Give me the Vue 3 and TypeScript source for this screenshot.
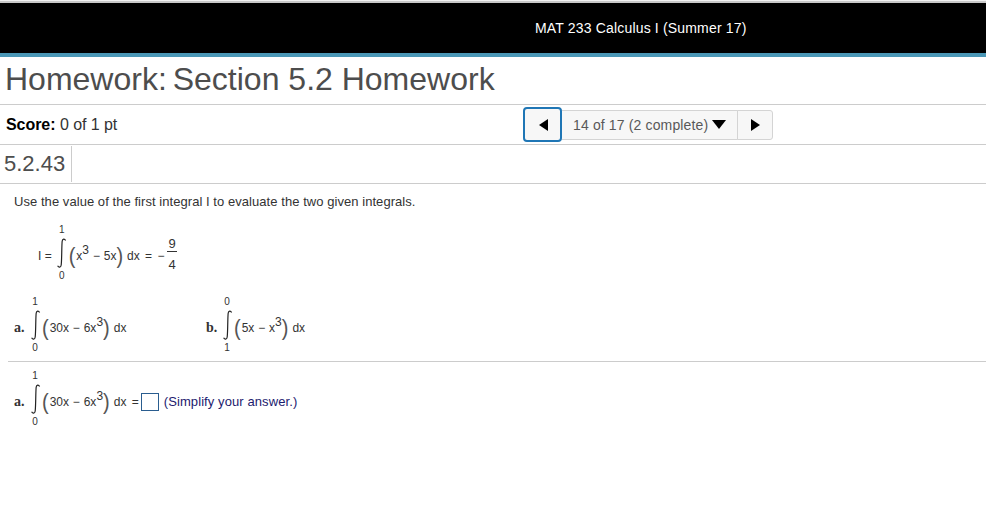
<script setup lang="ts">
const intPath = 'M8.6 2.4 C7.6 0.4 5.6 0.6 5.2 3 C4.6 8 4.9 21 4.2 27 C3.9 29.6 1.8 29.8 0.6 27.8'
</script>

<template>
  <div class="page">
    <header class="topbar">
      <span class="course">MAT 233 Calculus I (Summer 17)</span>
    </header>
    <h1 class="title"><span class="hw">Homework:</span> <span>Section 5.2 Homework</span></h1>
    <div class="score-row">
      <div class="score"><b>Score:</b> 0 of 1 pt</div>
      <nav class="pager">
        <button class="btn prev" type="button"><i class="tri left"></i></button>
        <button class="btn mid" type="button">14 of 17 (2 complete)<i class="tri down"></i></button>
        <button class="btn next" type="button"><i class="tri right"></i></button>
      </nav>
    </div>
    <div class="num-row"><div class="num">5.2.43</div></div>
    <main class="content">
      <p class="intro">Use the value of the first integral I to evaluate the two given integrals.</p>

      <div class="math eq">
        <span class="t lhs">I =</span>
        <span class="int"><span>1</span><svg width="9" height="30" viewBox="0 0 9 30"><path :d="intPath" /></svg><span>0</span></span>
        <span class="paren">(</span><span class="t">x<sup>3</sup> − 5x</span><span class="paren">)</span>
        <span class="t dx">dx = −</span>
        <span class="frac"><span>9</span><span class="fn">4</span></span>
      </div>

      <div class="parts">
        <div class="math part">
          <b class="lab">a.</b>
          <span class="int"><span>1</span><svg width="9" height="30" viewBox="0 0 9 30"><path :d="intPath" /></svg><span>0</span></span>
          <span class="paren">(</span><span class="t">30x − 6x<sup>3</sup></span><span class="paren">)</span>
          <span class="t dx">dx</span>
        </div>
        <div class="math part">
          <b class="lab">b.</b>
          <span class="int"><span>0</span><svg width="9" height="30" viewBox="0 0 9 30"><path :d="intPath" /></svg><span>1</span></span>
          <span class="paren">(</span><span class="t">5x − x<sup>3</sup></span><span class="paren">)</span>
          <span class="t dx">dx</span>
        </div>
      </div>

      <hr class="rule" />

      <div class="math answer">
        <b class="lab">a.</b>
        <span class="int"><span>1</span><svg width="9" height="30" viewBox="0 0 9 30"><path :d="intPath" /></svg><span>0</span></span>
        <span class="paren">(</span><span class="t">30x − 6x<sup>3</sup></span><span class="paren">)</span>
        <span class="t dx">dx =</span>
        <span class="box"></span>
        <span class="hint">(Simplify your answer.)</span>
      </div>
    </main>
  </div>
</template>

<style>
html, body { margin: 0; background: #fff; }
</style>

<style scoped>
.page {
  box-sizing: border-box;
  width: 986px;
  height: 506px;
  padding-top: 1px;
  overflow: hidden;
  font-family: "Liberation Sans", Arial, sans-serif;
  background: #f1f1f1 linear-gradient(#fff, #fff) 0 1px no-repeat;
}
.topbar {
  box-sizing: border-box;
  height: 56px;
  border-top: 2px solid #c8c8c8;
  border-bottom: 4px solid #4a97b6;
  background: #000;
  color: #fff;
  padding: 17px 0 0 535px;
  font-size: 14px;
  line-height: 16px;
  letter-spacing: 0.17px;
}
.title {
  box-sizing: border-box;
  height: 47px;
  margin: 0;
  padding: 4px 0 0 5px;
  font-size: 32px;
  line-height: 36px;
  font-weight: 400;
  color: #4d4d4d;
  white-space: nowrap;
}
.hw { margin-right: -3px; }
.score-row {
  box-sizing: border-box;
  height: 40px;
  border-top: 1px solid #ccc;
  display: flex;
  align-items: center;
  padding-left: 6px;
}
.score { font-size: 16px; color: #333; width: 517px; letter-spacing: -0.05px; }
.score b { color: #000; }
.pager { display: flex; align-items: center; }
.btn {
  box-sizing: border-box;
  height: 30px;
  margin: 0;
  padding: 0;
  background: #f7f7f7;
  border: 1px solid #d4d4d4;
  font-family: inherit;
  font-size: 14px;
  letter-spacing: 0.14px;
  color: #595959;
  display: flex;
  align-items: center;
  justify-content: center;
}
.prev {
  width: 39px;
  height: 35px;
  padding-left: 1px;
  border: 2px solid #1f76b5;
  border-radius: 4px;
}
.mid { width: 176px; border-left: 0; gap: 4px; justify-content: flex-start; padding-left: 11px; }
.next { width: 36px; border-left: 1px solid #d4d4d4; margin-left: -1px; border-radius: 0 3px 3px 0; }
.tri { display: block; width: 0; height: 0; border-style: solid; border-color: transparent; }
.left { border-width: 6.5px 9px 6.5px 0; border-right-color: #000; }
.right { border-width: 6.5px 0 6.5px 9px; border-left-color: #000; }
.down { border-width: 9px 7px 0 7px; border-top-color: #000; }
.num-row {
  box-sizing: border-box;
  height: 40px;
  border-top: 1px solid #ccc;
  border-bottom: 1px solid #ccc;
  padding-top: 1px;
}
.num {
  box-sizing: border-box;
  width: 72px;
  height: 36px;
  border-right: 1px solid #ccc;
  padding-left: 4px;
  font-size: 22px;
  line-height: 36px;
  color: #4d4d4d;
}
.content { font-size: 13px; color: #333; }
.intro { margin: 0; padding: 10px 0 0 14px; line-height: 16px; letter-spacing: 0.055px; }
.math { display: flex; align-items: center; white-space: nowrap; font-size: 12px; color: #333; }
.eq { margin-top: 13px; padding-left: 38px; height: 60px; }
.parts { display: flex; margin-top: 12px; padding-left: 14px; }
.part { width: 192px; height: 60px; }
.rule { border: 0; border-top: 1px solid #ccc; margin: 6px 0 0 8px; }
.answer { padding: 0 0 0 14px; height: 60px; margin-top: 7px; }
.t { display: block; margin-top: 5px; word-spacing: 0.5px; }
.lhs { word-spacing: 0; }
.t sup { font-size: 12px; line-height: 0; vertical-align: 6px; }
.int {
  display: flex;
  flex-direction: column;
  align-items: center;
  width: 14px;
  margin: 0 0 0 3px;
  font-size: 10px;
  line-height: 12px;
  gap: 2px;
}
.int svg { display: block; overflow: visible; }
.int path { fill: none; stroke: #222; stroke-width: 1.2; }
.paren { display: block; font-size: 20px; line-height: 24px; margin: 3px 1px 0 0; color: #555; transform: scaleY(1.1); }
.t + .paren { margin: 3px 0 0; }
.dx { margin-left: 4px; word-spacing: 2px; }
.lab { font-family: "Liberation Serif", serif; font-size: 14px; width: 11px; color: #333; margin-top: 5px; }
.frac { display: flex; flex-direction: column; align-items: center; margin-left: 3px; line-height: 14px; font-size: 13px; margin-top: 3px; }
.fn { border-top: 1px solid #333; padding: 6px 1px 0; }
.box {
  box-sizing: border-box;
  width: 18px;
  height: 18px;
  border: 1px solid #2a5d8f;
  margin: 5px 0 0 2px;
}
.hint { color: #1c1a6e; margin: 5px 0 0 5px; font-size: 13px; letter-spacing: 0.09px; }
</style>
